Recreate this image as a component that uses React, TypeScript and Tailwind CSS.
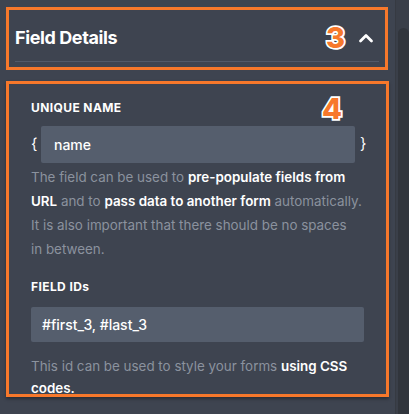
import React from 'react';

const font = { fontFamily: 'Inter, "Noto Sans", sans-serif' };

function Badge({ n }: { n: string }) {
  return (
    <span className="text-[29px] font-extrabold leading-none text-[#f7782b] [-webkit-text-stroke:3.5px_#ffffff] [paint-order:stroke_fill]">
      {n}
    </span>
  );
}

function ChevronUp() {
  return (
    <svg width="16" height="10" viewBox="0 0 16 10" fill="none">
      <path d="M2.5 8L8 2.5L13.5 8" stroke="#ffffff" strokeWidth="2.8" strokeLinecap="round" strokeLinejoin="round" />
    </svg>
  );
}

export default function App() {
  return (
    <div className="w-[409px] h-[414px] bg-[#3e4450] flex overflow-hidden" style={font}>
      <div className="w-[395px] shrink-0 min-w-0 flex flex-col pt-[7px] pl-[6px] pr-[7px]">
        {/* header */}
        <section className="border-[3px] border-[#f7782b] h-[63px] px-[6px] flex flex-col">
          <div className="flex-1 flex items-center pt-[4px]">
            <h2 className="text-[18px] font-bold tracking-[-0.4px] text-white flex-1">Field Details</h2>
            <Badge n="3" />
            <span className="ml-[13px] mr-[5px] flex items-center">
              <ChevronUp />
            </span>
          </div>
          <div className="h-px bg-[#525968] mb-[5px]" />
        </section>

        {/* body */}
        <section className="mt-[11px] mr-[-1px] border-[3px] border-[#f7782b] h-[316px] pl-[22px] pr-[18px] pt-[11px] shadow-[0_2px_3px_rgba(0,0,0,0.35)]">
          <div className="flex items-center justify-between h-[26px]">
            <span className="text-[12px] font-bold tracking-[0.4px] text-white">UNIQUE NAME</span>
            <span className="mr-[26px] mt-[2px]">
              <Badge n="4" />
            </span>
          </div>
          <div className="flex items-center mt-[5px]">
            <span className="text-white text-[15px] w-[10px]">{'{'}</span>
            <div className="w-[314px] h-[37px] bg-[#555e6d] rounded-[2px] flex items-center pl-[13px] text-[14px] font-medium text-white">
              name
            </div>
            <span className="text-white text-[15px] ml-[5px]">{'}'}</span>
          </div>
          <p className="mt-[2px] text-[13.4px] leading-[24px] text-[#8b929e] whitespace-nowrap">
            The field can be used to <b className="font-semibold text-white">pre-populate fields from</b>
            <br />
            <b className="font-semibold text-white">URL</b> and to <b className="font-semibold text-white">pass data to another form</b>{' '}
            automatically.
            <br />
            It is also important that there should be no spaces
            <br />
            in between.
          </p>

          <div className="mt-[17px] text-[12px] font-bold tracking-[0.4px] text-white">FIELD IDs</div>
          <div className="mt-[11px] w-[333px] h-[35px] bg-[#555e6d] rounded-[2px] flex items-center pl-[11px] text-[14px] font-medium text-white">
            #first_3, #last_3
          </div>
          <p className="mt-[13px] text-[13.4px] leading-[22px] text-[#8b929e] whitespace-nowrap">
            This id can be used to style your forms <b className="font-semibold text-white">using CSS</b>
            <br />
            <b className="font-semibold text-white">codes.</b>
          </p>
        </section>
      </div>

      {/* scrollbar */}
      <div className="flex-1 border-l border-[#363a42] bg-[#3a3f49] flex flex-col">
        <div className="h-[28px]" />
        <div className="flex-1 ml-[2px] rounded-t-[6px] bg-[#31353c]" />
      </div>
    </div>
  );
}
